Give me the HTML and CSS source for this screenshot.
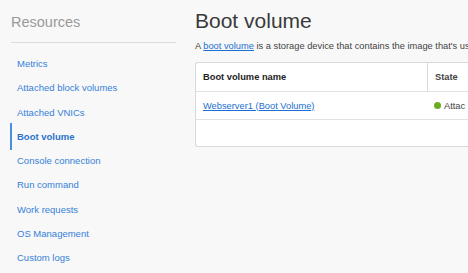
FILE: index.html
```html
<!DOCTYPE html>
<html lang="en">

<head>
    <meta charset="UTF-8">
    <meta name="viewport" content="width=device-width, initial-scale=1.0">
    <title>Boot volume</title>
    <link rel="stylesheet" href="styles.css">
</head>

<body>

    <div class="Pagina">
        <div class="Recursos">
            <h3>Resources</h3>
            <ul>
                <li><a href="#">Metrics</a></li>
                <li><a href="#">Attached block volumes</a></li>
                <li><a href="#">Attached VNICs</a></li>
                <li class="activo"><a href="#">Boot volume</a></li>
                <li><a href="#">Console connection</a></li>
                <li><a href="#">Run command</a></li>
                <li><a href="#">Work requests</a></li>
                <li><a href="#">OS Management</a></li>
                <li><a href="#">Custom logs</a></li>
            </ul>
        </div>

        <div class="Contenido">
            <h1>Boot volume</h1>
            <p class="descripcion">A <a href="#">boot volume</a> is a storage device that contains the image that's us</p>

            <div class="Tabla">
                <div class="fila cabecera">
                    <div class="celda nombre">Boot volume name</div>
                    <div class="celda estado">State</div>
                </div>
                <div class="fila">
                    <div class="celda nombre"><a href="#">Webserver1 (Boot Volume)</a></div>
                    <div class="celda estado"><span class="punto"></span>Attac</div>
                </div>
                <div class="fila vacia"></div>
            </div>
        </div>
    </div>

</body>

</html>
```

FILE: styles.css
```css
body {
    font-family: 'Liberation Sans', Arial, sans-serif;
    background-color: #f8f8f8;
    color: #333;
    margin: 0;
    overflow: hidden;
}


.Pagina {
    display: flex;
    width: 468px;
    overflow: hidden;
}


.Recursos {
    width: 165px;
    padding-left: 11px;
    flex-shrink: 0;
}


h3 {
    font-size: 14.5px;
    font-weight: 300;
    color: #9a9a9a;
    margin: 0;
    padding-top: 13px;
    line-height: 18px;
    padding-bottom: 11px;
    border-bottom: 1px solid #dcdcdc;
}


ul {
    list-style: none;
    margin: 0;
    padding: 9px 0 0 0;
}


li {
    height: 24.25px;
    line-height: 24.25px;
    font-size: 9.5px;
    padding-left: 5px;
    border-left: 2px solid transparent;
    margin-left: -1px;
}


li a {
    color: #3580d8;
    text-decoration: none;
}


.activo {
    border-left-color: #4a8ede;
    height: 27px;
    line-height: 27px;
    margin-top: -1.5px;
    margin-bottom: -1.25px;
}


.activo a {
    font-weight: bold;
    color: #2a74cc;
}


/* Parte derecha */
.Contenido {
    margin-left: 19px;
    flex: 1;
    min-width: 0;
}


h1 {
    font-size: 21px;
    font-weight: normal;
    color: #3a3a3a;
    margin: 0;
    padding-top: 9px;
    line-height: 24px;
}


.descripcion {
    font-size: 9.3px;
    color: #444;
    margin: 7px 0 0 0;
    line-height: 12px;
    white-space: nowrap;
}


.descripcion a,
.celda a {
    color: #1a6fd0;
    text-decoration: underline;
}


.Tabla {
    margin-top: 10px;
    background-color: #fff;
    border: 1px solid #d9d9d9;
    border-right: none;
    border-radius: 3px 0 0 3px;
}


.fila {
    display: flex;
    height: 27px;
    border-bottom: 1px solid #e2e2e2;
    align-items: center;
    font-size: 9.3px;
}


.cabecera {
    height: 28px;
    font-weight: bold;
    color: #222;
}


.vacia {
    height: 26px;
    border-bottom: none;
}


.celda {
    padding-left: 7px;
    height: 100%;
    display: flex;
    align-items: center;
}


.nombre {
    width: 224px;
    flex-shrink: 0;
}


.cabecera .nombre {
    border-right: 1px solid #d9d9d9;
}


.estado {
    flex: 1;
    color: #444;
}


.punto {
    display: inline-block;
    width: 7px;
    height: 7px;
    border-radius: 50%;
    background-color: #6aad1e;
    margin-right: 3px;
}
```
